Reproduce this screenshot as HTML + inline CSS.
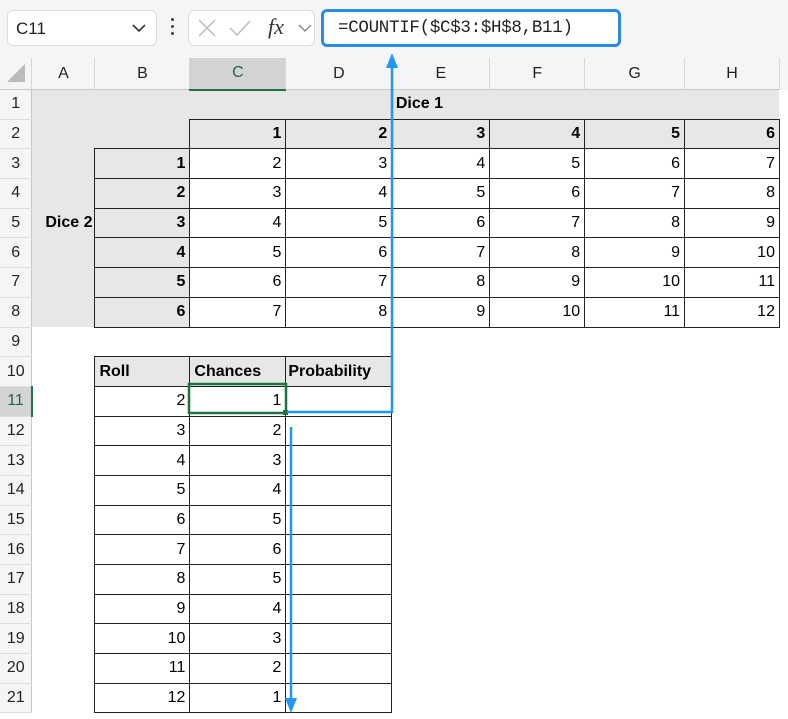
<!DOCTYPE html>
<html><head><meta charset="utf-8"><style>
*{box-sizing:border-box}
body{margin:0;width:788px;height:719px;background:#fff;font-family:"Liberation Sans",Arial,sans-serif;overflow:hidden;position:relative}
.top{position:absolute;left:0;top:0;width:788px;height:58px;background:#f5f5f5}
.box{position:absolute;background:#fff;border:1px solid #dcdcdc;border-radius:6px}
table{position:absolute;left:0;top:58px;border-collapse:collapse;table-layout:fixed}
td{padding:0 4px;font-size:16px;color:#000;white-space:nowrap;overflow:visible;text-align:left}
tr.h td{height:28px;background:#f5f5f5;text-align:center;color:#222;font-size:16px;border-right:1px solid #d8d8d8;border-bottom:1px solid #c8c8c8}
tr.rr td{height:29.7px}
tr.rr td.rh{background:#f5f5f5;text-align:center;color:#222;border-right:1px solid #c8c8c8;border-bottom:1px solid #dedede;padding:0}
.g{background:#e7e7e7}
.b{border:1.5px solid #222}
td.r{text-align:right}
.bo{font-weight:bold}
</style></head><body>
<div class="top"></div>
<div class="box" style="left:7px;top:10px;width:150px;height:36px"></div>
<div style="position:absolute;left:16px;top:19px;font-size:17px;color:#222">C11</div>
<svg style="position:absolute;left:132px;top:24px" width="14" height="9"><path d="M1 1L7 7L13 1" stroke="#333" stroke-width="1.6" fill="none"/></svg>
<div style="position:absolute;left:171px;top:18px;width:3px;height:3px;background:#444;border-radius:50%"></div>
<div style="position:absolute;left:171px;top:25px;width:3px;height:3px;background:#444;border-radius:50%"></div>
<div style="position:absolute;left:171px;top:32px;width:3px;height:3px;background:#444;border-radius:50%"></div>
<div class="box" style="left:188px;top:10px;width:127px;height:36px"></div>
<svg style="position:absolute;left:198px;top:19px" width="18" height="18"><path d="M1 1L17 17M17 1L1 17" stroke="#bbb" stroke-width="1.5"/></svg>
<svg style="position:absolute;left:229px;top:19px" width="22" height="18"><path d="M1 9L8 16L21 2" stroke="#bbb" stroke-width="1.5" fill="none"/></svg>
<div style="position:absolute;left:268px;top:14px;font-family:'Liberation Serif',serif;font-style:italic;font-size:22px;color:#333">fx</div>
<svg style="position:absolute;left:298px;top:24px" width="14" height="9"><path d="M1 1L7 7L13 1" stroke="#888" stroke-width="1.4" fill="none"/></svg>
<div style="position:absolute;left:321px;top:9px;width:300px;height:38px;border:3px solid #2b8ae6;border-radius:6px;background:#fff"></div>
<div style="position:absolute;left:338px;top:18px;font-family:'Liberation Mono',monospace;font-size:17.5px;color:#222;letter-spacing:-0.3px">=COUNTIF($C$3:$H$8,B11)</div>

<table>
<colgroup><col style="width:32px"><col style="width:63px"><col style="width:95px"><col style="width:96px"><col style="width:106px"><col style="width:98px"><col style="width:95px"><col style="width:100px"><col style="width:95px"><col style="width:8px"></colgroup>
<tr class="h"><td style="padding:0"><svg width="22" height="22" style="margin-top:4px"><path d="M20 2L20 20L2 20Z" fill="#bbb"/></svg></td><td>A</td><td>B</td><td style="background:#d3d3d3;color:#1e6b3e;border-bottom:2px solid #1e7145">C</td><td>D</td><td>E</td><td>F</td><td>G</td><td>H</td><td style="border:none"></td></tr>
<tr class="rr"><td class="rh">1</td><td class="g"></td><td class="g"></td><td class="g"></td><td class="g"></td><td class="g bo">Dice 1</td><td class="g"></td><td class="g"></td><td class="g"></td><td></td></tr>
<tr class="rr"><td class="rh">2</td><td class="g r" rowspan="7" style="font-weight:bold;padding:0 2px">Dice 2</td><td class="g"></td><td class="g b r bo">1</td><td class="g b r bo">2</td><td class="g b r bo">3</td><td class="g b r bo">4</td><td class="g b r bo">5</td><td class="g b r bo">6</td><td></td></tr>
<tr class="rr"><td class="rh">3</td><td class="g b r bo">1</td><td class="b r">2</td><td class="b r">3</td><td class="b r">4</td><td class="b r">5</td><td class="b r">6</td><td class="b r">7</td><td></td></tr>
<tr class="rr"><td class="rh">4</td><td class="g b r bo">2</td><td class="b r">3</td><td class="b r">4</td><td class="b r">5</td><td class="b r">6</td><td class="b r">7</td><td class="b r">8</td><td></td></tr>
<tr class="rr"><td class="rh">5</td><td class="g b r bo">3</td><td class="b r">4</td><td class="b r">5</td><td class="b r">6</td><td class="b r">7</td><td class="b r">8</td><td class="b r">9</td><td></td></tr>
<tr class="rr"><td class="rh">6</td><td class="g b r bo">4</td><td class="b r">5</td><td class="b r">6</td><td class="b r">7</td><td class="b r">8</td><td class="b r">9</td><td class="b r">10</td><td></td></tr>
<tr class="rr"><td class="rh">7</td><td class="g b r bo">5</td><td class="b r">6</td><td class="b r">7</td><td class="b r">8</td><td class="b r">9</td><td class="b r">10</td><td class="b r">11</td><td></td></tr>
<tr class="rr"><td class="rh">8</td><td class="g b r bo">6</td><td class="b r">7</td><td class="b r">8</td><td class="b r">9</td><td class="b r">10</td><td class="b r">11</td><td class="b r">12</td><td></td></tr>
<tr class="rr"><td class="rh">9</td><td></td><td></td><td></td><td></td><td></td><td></td><td></td><td></td><td></td></tr>
<tr class="rr"><td class="rh">10</td><td></td><td class="g b bo">Roll</td><td class="g b bo">Chances</td><td class="g b bo" style="padding:0 2px">Probability</td><td></td><td></td><td></td><td></td><td></td></tr>
<tr class="rr"><td class="rh" style="background:#d3d3d3;color:#1e6b3e;border-right:2px solid #1e7145">11</td><td></td><td class="b r">2</td><td class="b r">1</td><td class="b"></td><td></td><td></td><td></td><td></td><td></td></tr>
<tr class="rr"><td class="rh">12</td><td></td><td class="b r">3</td><td class="b r">2</td><td class="b"></td><td></td><td></td><td></td><td></td><td></td></tr>
<tr class="rr"><td class="rh">13</td><td></td><td class="b r">4</td><td class="b r">3</td><td class="b"></td><td></td><td></td><td></td><td></td><td></td></tr>
<tr class="rr"><td class="rh">14</td><td></td><td class="b r">5</td><td class="b r">4</td><td class="b"></td><td></td><td></td><td></td><td></td><td></td></tr>
<tr class="rr"><td class="rh">15</td><td></td><td class="b r">6</td><td class="b r">5</td><td class="b"></td><td></td><td></td><td></td><td></td><td></td></tr>
<tr class="rr"><td class="rh">16</td><td></td><td class="b r">7</td><td class="b r">6</td><td class="b"></td><td></td><td></td><td></td><td></td><td></td></tr>
<tr class="rr"><td class="rh">17</td><td></td><td class="b r">8</td><td class="b r">5</td><td class="b"></td><td></td><td></td><td></td><td></td><td></td></tr>
<tr class="rr"><td class="rh">18</td><td></td><td class="b r">9</td><td class="b r">4</td><td class="b"></td><td></td><td></td><td></td><td></td><td></td></tr>
<tr class="rr"><td class="rh">19</td><td></td><td class="b r">10</td><td class="b r">3</td><td class="b"></td><td></td><td></td><td></td><td></td><td></td></tr>
<tr class="rr"><td class="rh">20</td><td></td><td class="b r">11</td><td class="b r">2</td><td class="b"></td><td></td><td></td><td></td><td></td><td></td></tr>
<tr class="rr"><td class="rh">21</td><td></td><td class="b r">12</td><td class="b r">1</td><td class="b"></td><td></td><td></td><td></td><td></td><td></td></tr>
</table>
<svg style="position:absolute;left:0;top:0" width="788" height="719">
<rect x="189" y="384" width="97" height="29" fill="none" stroke="#1e7145" stroke-width="2.5"/>
<rect x="283" y="410" width="5" height="5" fill="#1e7145"/>
<path d="M392 62L392 412L287 412" stroke="#2196f3" stroke-width="2.5" fill="none"/>
<path d="M386 68L392 53L398 68Z" fill="#2196f3"/>
<path d="M291 427L291 700" stroke="#2196f3" stroke-width="2.5" fill="none"/>
<path d="M285 698L291 713L297 698Z" fill="#2196f3"/>
</svg>
</body></html>
